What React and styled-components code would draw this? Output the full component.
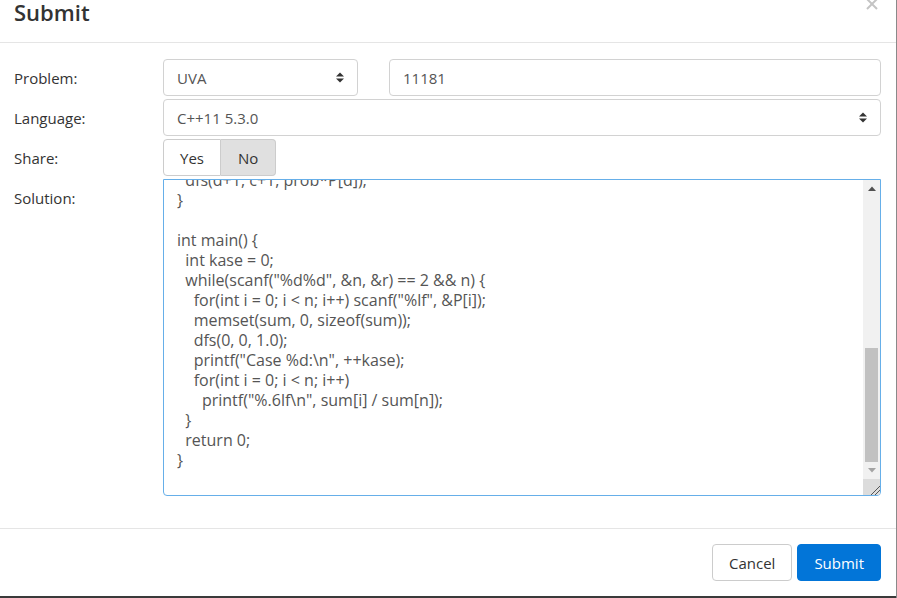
import React from 'react'
import styled, { createGlobalStyle } from 'styled-components'

const GlobalStyle = createGlobalStyle`
  html, body {
    margin: 0;
    padding: 0;
    background: #fff;
  }
  body {
    font-family: 'Open Sans', 'Liberation Sans', sans-serif;
    font-size: 15px;
    color: #333;
  }
`

const Modal = styled.div`
  width: 897px;
  height: 598px;
  display: flex;
  flex-direction: column;
  background: #fff;
  border-right: 1px solid #8a8a8a;
  box-sizing: border-box;
  overflow: hidden;
`

const Header = styled.div`
  height: 43px;
  display: flex;
  justify-content: space-between;
  align-items: flex-start;
  padding: 0 18px 0 14px;
  border-bottom: 1px solid #e5e5e5;
`

const Title = styled.h4`
  margin: 0;
  font-size: 22px;
  line-height: 24px;
  font-weight: 600;
  color: #333;
`

const Close = styled.span`
  display: flex;
  margin-top: -2px;
`

const Body = styled.div`
  padding: 16px 15px 32px 14px;
  display: grid;
  grid-template-columns: 149px 1fr;
  row-gap: 3px;
  align-items: center;
`

const Label = styled.div`
  color: #333;
  font-size: 15px;
  align-self: ${p => (p.$top ? 'start' : 'center')};
  padding-top: ${p => (p.$top ? '9px' : '0')};
`

const Row = styled.div`
  display: flex;
  gap: 31px;
`

const Control = styled.div`
  height: 37px;
  box-sizing: border-box;
  border: 1px solid #d2d2d2;
  border-radius: 4px;
  display: flex;
  align-items: center;
  justify-content: space-between;
  padding: 0 13px;
  color: #555;
  font-size: 15px;
  width: ${p => p.$width || 'auto'};
  flex: ${p => (p.$width ? 'none' : '1')};
`

const ButtonGroup = styled.div`
  display: flex;
`

const Toggle = styled.div`
  height: 37px;
  box-sizing: border-box;
  display: flex;
  align-items: center;
  padding: 0 ${p => (p.$active ? '17px' : '16px')};
  border: 1px solid #ccc;
  background: ${p => (p.$active ? '#e0e0e0' : '#fff')};
  color: #333;
  &:first-child {
    border-radius: 4px 0 0 4px;
  }
  &:last-child {
    border-left: none;
    border-radius: 0 4px 4px 0;
  }
`

const TextArea = styled.div`
  height: 317px;
  box-sizing: border-box;
  border: 1px solid #66afe9;
  border-radius: 0 0 4px 4px;
  display: flex;
  overflow: hidden;
`

const CodeView = styled.div`
  flex: 1;
  overflow: hidden;
  padding: 0 13px;
`

const Code = styled.pre`
  margin: -10px 0 0;
  font-family: 'Open Sans', 'Liberation Sans', sans-serif;
  font-size: 16px;
  line-height: 20px;
  color: #555;
  white-space: pre;
`

const Scrollbar = styled.div`
  width: 17px;
  display: flex;
  flex-direction: column;
  background: #f1f1f1;
`

const ScrollButton = styled.div`
  height: 17px;
  display: flex;
  align-items: center;
  justify-content: center;
`

const Track = styled.div`
  flex: 1;
  display: flex;
  flex-direction: column;
  justify-content: flex-end;
`

const Thumb = styled.div`
  height: 114px;
  margin: 0 2px;
  background: #c1c1c1;
`

const Resizer = styled.div`
  height: 16px;
  background: #dcdcdc;
  display: flex;
  align-items: flex-end;
  justify-content: flex-end;
`

const Footer = styled.div`
  border-top: 1px solid #e5e5e5;
  padding: 15px 15px;
  display: flex;
  justify-content: flex-end;
  gap: 5px;
`

const Button = styled.button`
  height: 37px;
  box-sizing: border-box;
  padding: 0 ${p => (p.$primary ? '16px' : '16px')};
  border-radius: 4px;
  font-family: 'Open Sans', 'Liberation Sans', sans-serif;
  font-size: 15px;
  border: 1px solid ${p => (p.$primary ? '#0275d8' : '#ccc')};
  background: ${p => (p.$primary ? '#0275d8' : '#fff')};
  color: ${p => (p.$primary ? '#fff' : '#333')};
`

const Backdrop = styled.div`
  height: 2px;
  margin-top: auto;
  background: #3a3a3a;
`

const SelectArrows = () => (
  <svg width="8" height="11" viewBox="0 0 8 11">
    <path d="M0 4.5 L4 0.5 L8 4.5 Z M0 6.5 L4 10.5 L8 6.5 Z" fill="#333" />
  </svg>
)

const code = `  dfs(d+1, c+1, prob*P[d]);
}

int main() {
  int kase = 0;
  while(scanf("%d%d", &n, &r) == 2 && n) {
    for(int i = 0; i < n; i++) scanf("%lf", &P[i]);
    memset(sum, 0, sizeof(sum));
    dfs(0, 0, 1.0);
    printf("Case %d:\\n", ++kase);
    for(int i = 0; i < n; i++)
      printf("%.6lf\\n", sum[i] / sum[n]);
  }
  return 0;
}
`

const App = () => {
  return (
    <>
      <GlobalStyle />
      <Modal>
        <Header>
          <Title>Submit</Title>
          <Close>
            <svg width="12" height="12" viewBox="0 0 12 12">
              <path d="M1 1 L11 11 M11 1 L1 11" stroke="#c4c4c4" strokeWidth="2" />
            </svg>
          </Close>
        </Header>
        <Body>
          <Label>Problem:</Label>
          <Row>
            <Control $width="195px">
              UVA
              <SelectArrows />
            </Control>
            <Control>11181</Control>
          </Row>
          <Label>Language:</Label>
          <Control>
            C++11 5.3.0
            <SelectArrows />
          </Control>
          <Label>Share:</Label>
          <ButtonGroup>
            <Toggle>Yes</Toggle>
            <Toggle $active>No</Toggle>
          </ButtonGroup>
          <Label $top>Solution:</Label>
          <TextArea>
            <CodeView>
              <Code>{code}</Code>
            </CodeView>
            <Scrollbar>
              <ScrollButton>
                <svg width="8" height="5" viewBox="0 0 8 5">
                  <path d="M0 5 L4 0.5 L8 5 Z" fill="#505050" />
                </svg>
              </ScrollButton>
              <Track>
                <Thumb />
              </Track>
              <ScrollButton>
                <svg width="8" height="5" viewBox="0 0 8 5">
                  <path d="M0 0 L4 4.5 L8 0 Z" fill="#a3a3a3" />
                </svg>
              </ScrollButton>
              <Resizer>
                <svg width="10" height="10" viewBox="0 0 10 10">
                  <path d="M1 10 L10 1 M5 10 L10 5" stroke="#555" strokeWidth="1" />
                </svg>
              </Resizer>
            </Scrollbar>
          </TextArea>
        </Body>
        <Footer>
          <Button>Cancel</Button>
          <Button $primary>Submit</Button>
        </Footer>
        <Backdrop />
      </Modal>
    </>
  )
}

export default App
